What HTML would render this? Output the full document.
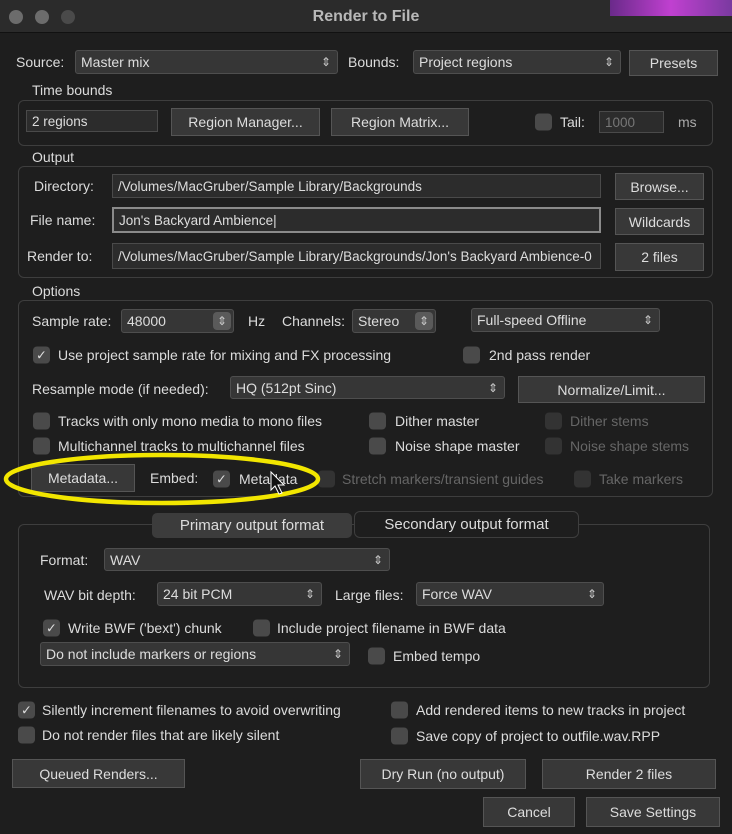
<!DOCTYPE html>
<html><head><meta charset="utf-8"><style>
*{box-sizing:border-box;margin:0;padding:0}
body{width:732px;height:834px;background:#1e1e1e;font-family:"Liberation Sans",sans-serif;font-size:14px;color:#dcdcdc;position:relative;overflow:hidden}
.a{position:absolute;white-space:nowrap}
.t{position:absolute;white-space:nowrap;transform:translateY(-50%)}
.f{position:absolute;background:#2c2c2c;border:1px solid #4a4a4a;padding-left:5px;display:flex;align-items:center;color:#ddd;font-size:13.5px}
.b{position:absolute;background:#383838;border:1px solid #555;display:flex;align-items:center;justify-content:center;color:#ddd}
.s{position:absolute;background:#363636;border:1px solid #4e4e4e;border-radius:3px;padding-left:5px;display:flex;align-items:center;color:#ddd}
.s:after{content:"⇕";position:absolute;right:6px;font-size:12px;color:#ccc}
.g{position:absolute;border:1px solid #3e3e3e;border-radius:6px}
.c{position:absolute;width:17px;height:17px;background:#4a4a4a;border-radius:4px;transform:translateY(-50%);display:flex;align-items:center;justify-content:center;color:#ddd;font-size:13px}
.dim{color:#666}
.cd{background:#333}
</style></head><body>
<div class="a" style="left:0;top:0;width:732px;height:33px;background:#2b2b2b;border-bottom:1px solid #111"></div>
<div class="a" style="left:610px;top:0;width:122px;height:16px;background:linear-gradient(90deg,#6a2a8a,#c040d0,#7a3aa0)"></div>
<div class="a" style="left:9px;top:10px;width:14px;height:14px;border-radius:50%;background:#6c6c6c"></div>
<div class="a" style="left:35px;top:10px;width:14px;height:14px;border-radius:50%;background:#6c6c6c"></div>
<div class="a" style="left:61px;top:10px;width:14px;height:14px;border-radius:50%;background:#4a4a4a"></div>
<div class="t" style="left:0;width:732px;text-align:center;top:17px;font-weight:bold;font-size:16px;color:#b8b8b8">Render to File</div>

<div class="t" style="left:16px;top:62px">Source:</div>
<div class="s" style="left:75px;top:50px;width:263px;height:24px">Master mix</div>
<div class="t" style="left:348px;top:62px">Bounds:</div>
<div class="s" style="left:413px;top:50px;width:208px;height:24px">Project regions</div>
<div class="b" style="left:629px;top:50px;width:89px;height:26px">Presets</div>

<div class="t" style="left:32px;top:90px">Time bounds</div>
<div class="g" style="left:18px;top:100px;width:695px;height:46px"></div>
<div class="f" style="left:26px;top:110px;width:132px;height:22px">2 regions</div>
<div class="b" style="left:171px;top:108px;width:149px;height:28px">Region Manager...</div>
<div class="b" style="left:331px;top:108px;width:138px;height:28px">Region Matrix...</div>
<div class="c" style="left:535px;top:122px"></div>
<div class="t" style="left:560px;top:122px">Tail:</div>
<div class="f" style="left:599px;top:111px;width:65px;height:22px;color:#777">1000</div>
<div class="t" style="left:678px;top:122px;color:#aaa">ms</div>

<div class="t" style="left:32px;top:157px">Output</div>
<div class="g" style="left:18px;top:166px;width:695px;height:112px"></div>
<div class="t" style="left:34px;top:186px">Directory:</div>
<div class="f" style="left:112px;top:174px;width:489px;height:24px">/Volumes/MacGruber/Sample Library/Backgrounds</div>
<div class="b" style="left:615px;top:173px;width:89px;height:27px">Browse...</div>
<div class="t" style="left:30px;top:220px">File name:</div>
<div class="f" style="left:112px;top:207px;width:489px;height:26px;border:2px solid #8a8a8a">Jon's Backyard Ambience|</div>
<div class="b" style="left:615px;top:208px;width:89px;height:27px">Wildcards</div>
<div class="t" style="left:27px;top:256px">Render to:</div>
<div class="f" style="left:112px;top:243px;width:489px;height:26px;overflow:hidden">/Volumes/MacGruber/Sample Library/Backgrounds/Jon's Backyard Ambience-0</div>
<div class="b" style="left:615px;top:243px;width:89px;height:28px">2 files</div>

<div class="t" style="left:32px;top:291px">Options</div>
<div class="g" style="left:18px;top:300px;width:695px;height:197px"></div>
<div class="t" style="left:32px;top:321px">Sample rate:</div>
<div class="s" style="left:121px;top:309px;width:113px;height:24px">48000<span style="position:absolute;right:2px;top:2px;width:18px;height:18px;background:#5a5a5a;border-radius:4px"></span></div>
<div class="t" style="left:248px;top:321px">Hz</div>
<div class="t" style="left:282px;top:321px">Channels:</div>
<div class="s" style="left:352px;top:309px;width:84px;height:24px">Stereo<span style="position:absolute;right:2px;top:2px;width:18px;height:18px;background:#5a5a5a;border-radius:4px"></span></div>
<div class="s" style="left:471px;top:308px;width:189px;height:24px">Full-speed Offline</div>
<div class="c" style="left:33px;top:355px">✓</div>
<div class="t" style="left:58px;top:355px">Use project sample rate for mixing and FX processing</div>
<div class="c" style="left:463px;top:355px"></div>
<div class="t" style="left:489px;top:355px">2nd pass render</div>
<div class="t" style="left:32px;top:389px">Resample mode (if needed):</div>
<div class="s" style="left:230px;top:376px;width:275px;height:23px">HQ (512pt Sinc)</div>
<div class="b" style="left:518px;top:376px;width:187px;height:27px">Normalize/Limit...</div>
<div class="c" style="left:33px;top:421px"></div>
<div class="t" style="left:58px;top:421px">Tracks with only mono media to mono files</div>
<div class="c" style="left:369px;top:421px"></div>
<div class="t" style="left:395px;top:421px">Dither master</div>
<div class="c cd" style="left:545px;top:421px"></div>
<div class="t dim" style="left:570px;top:421px">Dither stems</div>
<div class="c" style="left:33px;top:446px"></div>
<div class="t" style="left:58px;top:446px">Multichannel tracks to multichannel files</div>
<div class="c" style="left:369px;top:446px"></div>
<div class="t" style="left:395px;top:446px">Noise shape master</div>
<div class="c cd" style="left:545px;top:446px"></div>
<div class="t dim" style="left:570px;top:446px">Noise shape stems</div>
<div class="b" style="left:31px;top:464px;width:104px;height:28px">Metadata...</div>
<div class="t" style="left:150px;top:478px">Embed:</div>
<div class="c" style="left:213px;top:479px">✓</div>
<div class="t" style="left:239px;top:479px">Metadata</div>
<div class="c cd" style="left:318px;top:479px"></div>
<div class="t dim" style="left:342px;top:479px">Stretch markers/transient guides</div>
<div class="c cd" style="left:574px;top:479px"></div>
<div class="t dim" style="left:599px;top:479px">Take markers</div>
<svg class="a" style="left:0;top:450px" width="330" height="60"><ellipse cx="162" cy="29" rx="156" ry="24" fill="none" stroke="#f2e600" stroke-width="4.5"/><polygon points="271,22 271,40 275,36 279,44 282,43 278,35 284,35" fill="#111" stroke="#fff" stroke-width="1"/></svg>

<div class="g" style="left:18px;top:524px;width:692px;height:164px"></div>
<div class="a" style="left:152px;top:513px;width:200px;height:25px;background:#3c3c3c;border-radius:5px;font-size:15px;display:flex;align-items:center;justify-content:center">Primary output format</div>
<div class="a" style="left:354px;top:511px;width:225px;height:27px;background:#1e1e1e;border:1px solid #3e3e3e;border-radius:6px;font-size:15px;display:flex;align-items:center;justify-content:center">Secondary output format</div>
<div class="t" style="left:40px;top:560px">Format:</div>
<div class="s" style="left:104px;top:548px;width:286px;height:23px">WAV</div>
<div class="t" style="left:44px;top:595px">WAV bit depth:</div>
<div class="s" style="left:157px;top:582px;width:165px;height:24px">24 bit PCM</div>
<div class="t" style="left:335px;top:595px">Large files:</div>
<div class="s" style="left:416px;top:582px;width:188px;height:24px">Force WAV</div>
<div class="c" style="left:43px;top:628px">✓</div>
<div class="t" style="left:68px;top:628px">Write BWF ('bext') chunk</div>
<div class="c" style="left:253px;top:628px"></div>
<div class="t" style="left:277px;top:628px">Include project filename in BWF data</div>
<div class="s" style="left:40px;top:642px;width:310px;height:24px">Do not include markers or regions</div>
<div class="c" style="left:368px;top:656px"></div>
<div class="t" style="left:393px;top:656px">Embed tempo</div>

<div class="c" style="left:18px;top:710px">✓</div>
<div class="t" style="left:42px;top:710px">Silently increment filenames to avoid overwriting</div>
<div class="c" style="left:391px;top:710px"></div>
<div class="t" style="left:416px;top:710px">Add rendered items to new tracks in project</div>
<div class="c" style="left:18px;top:735px"></div>
<div class="t" style="left:42px;top:735px">Do not render files that are likely silent</div>
<div class="c" style="left:391px;top:736px"></div>
<div class="t" style="left:416px;top:736px">Save copy of project to outfile.wav.RPP</div>

<div class="b" style="left:12px;top:759px;width:173px;height:29px">Queued Renders...</div>
<div class="b" style="left:360px;top:759px;width:166px;height:30px">Dry Run (no output)</div>
<div class="b" style="left:542px;top:759px;width:174px;height:30px">Render 2 files</div>
<div class="b" style="left:483px;top:797px;width:92px;height:30px">Cancel</div>
<div class="b" style="left:586px;top:797px;width:134px;height:30px">Save Settings</div>
</body></html>
